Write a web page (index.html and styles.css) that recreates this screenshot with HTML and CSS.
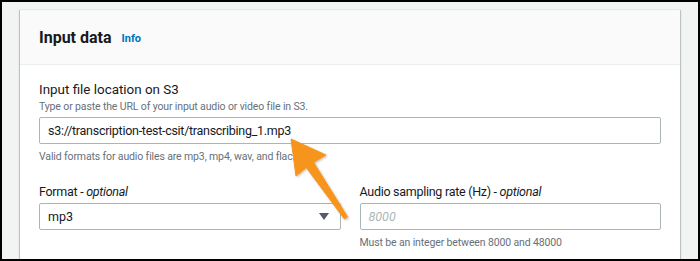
FILE: index.html
```html
<!DOCTYPE html>
<html>
<head>
<meta charset="utf-8">
<link rel="stylesheet" href="styles.css">
</head>
<body>
<div class="frame">
  <div class="card">
    <div class="card-header">
      <h2 class="title">Input data</h2>
      <a class="info">Info</a>
    </div>
    <div class="card-body">
      <div class="field">
        <div class="label label-wide">Input file location on S3</div>
        <div class="desc">Type or paste the URL of your input audio or video file in S3.</div>
        <div class="input">s3://transcription-test-csit/transcribing_1.mp3</div>
        <div class="hint">Valid formats for audio files are mp3, mp4, wav, and flac.</div>
      </div>
      <div class="row">
        <div class="field col">
          <div class="label">Format - <i>optional</i></div>
          <div class="input select"><span>mp3</span><span class="caret"></span></div>
        </div>
        <div class="field col">
          <div class="label">Audio sampling rate (Hz) - <i>optional</i></div>
          <div class="input placeholder">8000</div>
          <div class="hint">Must be an integer between 8000 and 48000</div>
        </div>
      </div>
    </div>
  </div>
  <svg class="arrow" width="700" height="261" viewBox="0 0 700 261">
    <defs>
      <filter id="sh" x="-20%" y="-20%" width="140%" height="140%">
        <feDropShadow dx="1" dy="1" stdDeviation="1" flood-color="#000" flood-opacity="0.25"/>
      </filter>
    </defs>
    <polygon filter="url(#sh)" fill="#f7941d" stroke="#f7941d" stroke-width="1" stroke-linejoin="round"
      points="291,139 326,155 313.7,162.4 347.6,216.9 344.4,219.1 306.3,167.6 296,176"/>
  </svg>
</div>
</body>
</html>
```
FILE: styles.css
```css
html, body {
  margin: 0;
  padding: 0;
}
body {
  width: 700px;
  height: 261px;
  overflow: hidden;
  font-family: Roboto, "Noto Sans", Arial, sans-serif;
  color: #16191f;
}
.frame {
  position: relative;
  box-sizing: border-box;
  width: 700px;
  height: 261px;
  border: 2px solid #000;
  background: #f2f3f3;
  padding: 8px 18px 0 18px;
  overflow: hidden;
}
.card {
  background: #fff;
  height: 260px;
  box-shadow: 0 1px 1px 0 rgba(0,28,36,.3), 1px 0 1px 0 rgba(0,28,36,.18), -1px 0 1px 0 rgba(0,28,36,.18);
}
.card-header {
  height: 55px;
  box-sizing: border-box;
  background: #fafafa;
  border-bottom: 1px solid #eaeded;
  padding: 0 19px;
  display: flex;
  align-items: center;
  gap: 10px;
}
.title {
  margin: 0;
  font-size: 16px;
  font-weight: 700;
}
.info {
  color: #0073bb;
  font-size: 11px;
  font-weight: 700;
  margin-top: 2px;
}
.card-body {
  padding: 16px 19px 0 19px;
}
.label {
  font-size: 12.5px;
  line-height: 18px;
  letter-spacing: -0.28px;
}
.label-wide {
  font-size: 13.4px;
  letter-spacing: 0;
}
.label i {
  font-style: italic;
}
.desc, .hint {
  font-size: 10.5px;
  line-height: 16px;
  letter-spacing: -0.13px;
  color: #687078;
}
.input {
  box-sizing: border-box;
  height: 27px;
  border: 1px solid #aab7b8;
  border-radius: 2px;
  padding: 0 8px;
  display: flex;
  align-items: center;
  font-size: 12.5px;
  letter-spacing: -0.28px;
  margin: 2px 0 5px;
}
.placeholder {
  color: #aab7b8;
  font-style: italic;
  letter-spacing: 0;
}
.row {
  display: flex;
  gap: 19px;
  margin-top: 18px;
}
.col {
  flex: 1;
}
.row .label {
  margin-bottom: 2px;
}
.select {
  justify-content: space-between;
  letter-spacing: 0;
  font-size: 12.5px;
}
.caret {
  width: 0;
  height: 0;
  border-left: 5px solid transparent;
  border-right: 5px solid transparent;
  border-top: 7px solid #545b64;
  margin-right: 3px;
}
.arrow {
  position: absolute;
  left: -2px;
  top: -2px;
  pointer-events: none;
}
```
